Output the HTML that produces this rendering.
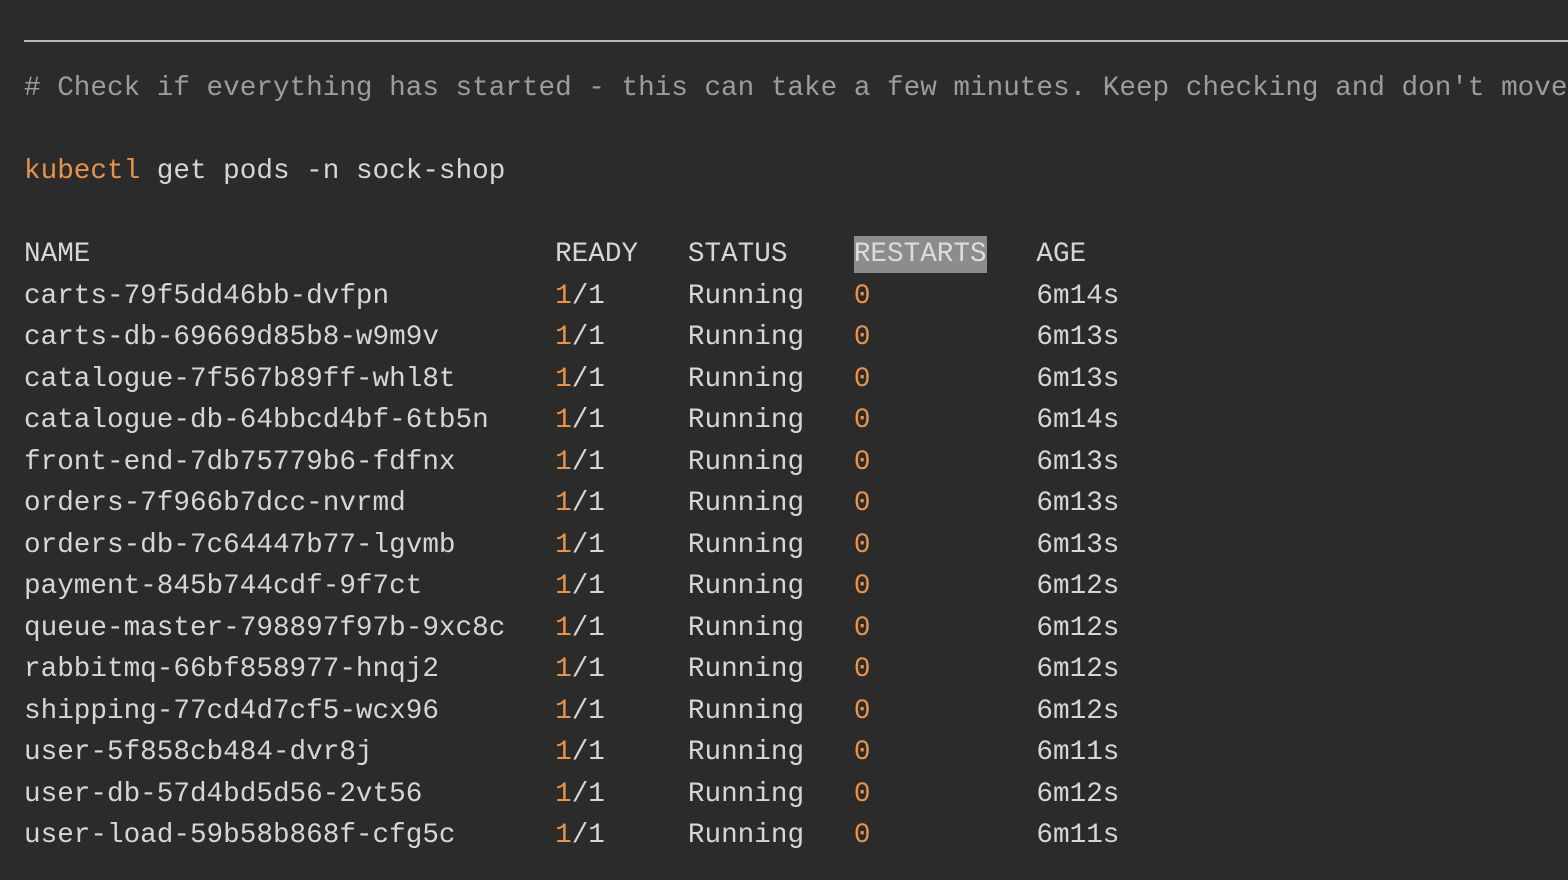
<!DOCTYPE html>
<html><head><meta charset="utf-8"><style>
html,body{margin:0;padding:0;background:#2b2b2b;width:1568px;height:880px;overflow:hidden}
.hr{position:absolute;left:24px;top:40px;width:1544px;height:2px;background:#b8b8b8}
pre{position:absolute;left:24px;top:68px;margin:0;font-family:"Liberation Mono",monospace;font-size:27.67px;line-height:41.5px;color:#d6d6d6;white-space:pre}
.c{color:#9c9c9c}.o{color:#e8924a}.h{background:#8c8c8c;color:#dcdcdc;padding:3px 0}
</style></head><body>
<div class="hr"></div>
<pre><span class="c"># Check if everything has started - this can take a few minutes. Keep checking and don't move</span>

<span class="o">kubectl</span> get pods -n sock-shop

NAME                            READY   STATUS    <span class="h">RESTARTS</span>   AGE
carts-79f5dd46bb-dvfpn          <span class="o">1</span>/1     Running   <span class="o">0</span>          6m14s
carts-db-69669d85b8-w9m9v       <span class="o">1</span>/1     Running   <span class="o">0</span>          6m13s
catalogue-7f567b89ff-whl8t      <span class="o">1</span>/1     Running   <span class="o">0</span>          6m13s
catalogue-db-64bbcd4bf-6tb5n    <span class="o">1</span>/1     Running   <span class="o">0</span>          6m14s
front-end-7db75779b6-fdfnx      <span class="o">1</span>/1     Running   <span class="o">0</span>          6m13s
orders-7f966b7dcc-nvrmd         <span class="o">1</span>/1     Running   <span class="o">0</span>          6m13s
orders-db-7c64447b77-lgvmb      <span class="o">1</span>/1     Running   <span class="o">0</span>          6m13s
payment-845b744cdf-9f7ct        <span class="o">1</span>/1     Running   <span class="o">0</span>          6m12s
queue-master-798897f97b-9xc8c   <span class="o">1</span>/1     Running   <span class="o">0</span>          6m12s
rabbitmq-66bf858977-hnqj2       <span class="o">1</span>/1     Running   <span class="o">0</span>          6m12s
shipping-77cd4d7cf5-wcx96       <span class="o">1</span>/1     Running   <span class="o">0</span>          6m12s
user-5f858cb484-dvr8j           <span class="o">1</span>/1     Running   <span class="o">0</span>          6m11s
user-db-57d4bd5d56-2vt56        <span class="o">1</span>/1     Running   <span class="o">0</span>          6m12s
user-load-59b58b868f-cfg5c      <span class="o">1</span>/1     Running   <span class="o">0</span>          6m11s</pre>
</body></html>
